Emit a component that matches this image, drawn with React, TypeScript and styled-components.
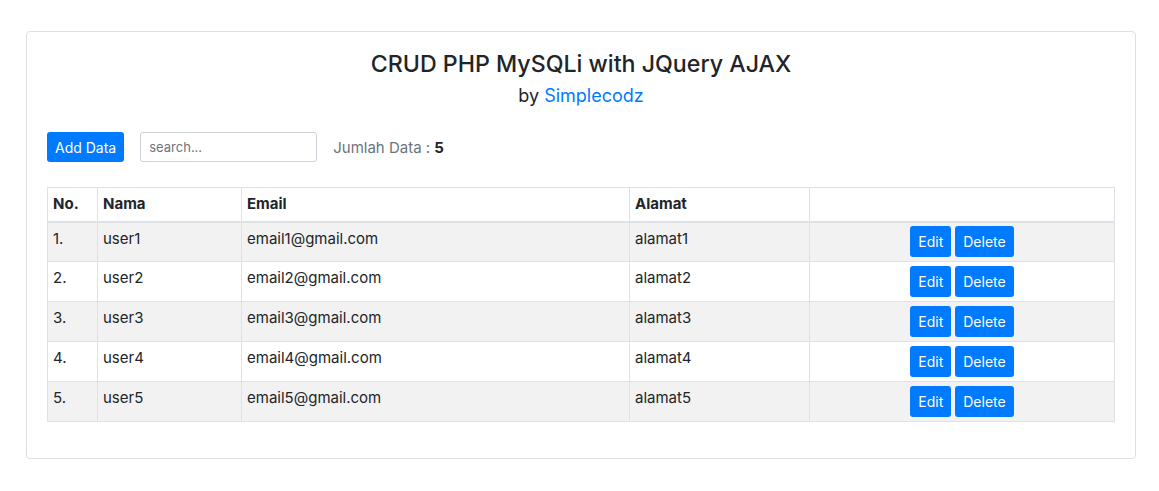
import React from "react";
import styled, { createGlobalStyle } from "styled-components";

const Global = createGlobalStyle`
  html, body { margin: 0; padding: 0; background: #fff; }
  body { font-family: Inter, "Noto Sans", sans-serif; color: #212529; }
  * { box-sizing: border-box; }
`;

const Page = styled.div`
  padding: 31px 23px 0 26px;
`;

const Card = styled.div`
  border: 1px solid #dfdfdf;
  border-radius: 4px;
  padding: 18px 20px 36px;
`;

const Header = styled.div`
  text-align: center;
`;

const Title = styled.h1`
  margin: 0;
  font-size: 23.2px;
  font-weight: 500;
  line-height: 29px;
  color: #212529;
`;

const Subtitle = styled.div`
  font-size: 18px;
  line-height: 26px;
  margin-top: 4px;
`;

const Link = styled.span`
  color: #007bff;
`;

const Toolbar = styled.div`
  display: flex;
  align-items: center;
  margin-top: 23px;
  height: 30px;
`;

const Button = styled.button<{ $h?: number }>`
  font-family: inherit;
  background: #007bff;
  color: #fff;
  border: none;
  border-radius: 3px;
  font-size: 14px;
  height: ${(p) => p.$h ?? 30}px;
  padding: 0 8px;
  cursor: pointer;
`;

const Search = styled.input`
  font-family: inherit;
  margin-left: 16px;
  width: 177px;
  height: 30px;
  border: 1px solid #ced4da;
  border-radius: 3px;
  padding: 0 8px;
  font-size: 13px;
  color: #495057;
  &::placeholder { color: #6c757d; }
`;

const Count = styled.div`
  margin-left: 16px;
  font-size: 15px;
  color: #6c757d;
  b { color: #212529; font-weight: 700; }
`;

const Table = styled.table`
  margin-top: 25px;
  width: 100%;
  border-collapse: collapse;
  table-layout: fixed;
  font-size: 15px;
`;

const Th = styled.th`
  text-align: left;
  font-weight: 700;
  border: 1px solid #dee2e6;
  border-bottom: 2px solid #dee2e6;
  padding: 0 5px 2px;
  height: 34px;
  vertical-align: middle;
`;

const Row = styled.tr<{ $odd: boolean }>`
  background: ${(p) => (p.$odd ? "#f2f2f2" : "#fff")};
`;

const Td = styled.td`
  border: 1px solid #dee2e6;
  padding: 6px 5px 0;
  height: 40px;
  vertical-align: top;
  text-align: left;
`;

const ActionCell = styled.td`
  border: 1px solid #dee2e6;
  height: 40px;
  padding: 0;
  text-align: center;
  vertical-align: middle;
`;

const Actions = styled.div`
  display: inline-flex;
  gap: 4px;
`;

const users = [1, 2, 3, 4, 5];

export default function App() {
  return (
    <>
      <Global />
      <Page>
        <Card>
          <Header>
            <Title>CRUD PHP MySQLi with JQuery AJAX</Title>
            <Subtitle>
              by <Link>Simplecodz</Link>
            </Subtitle>
          </Header>
          <Toolbar>
            <Button>Add Data</Button>
            <Search placeholder="search..." />
            <Count>
              Jumlah Data : <b>5</b>
            </Count>
          </Toolbar>
          <Table>
            <colgroup>
              <col style={{ width: 50 }} />
              <col style={{ width: 144 }} />
              <col style={{ width: 388 }} />
              <col style={{ width: 180 }} />
              <col />
            </colgroup>
            <thead>
              <tr>
                <Th>No.</Th>
                <Th>Nama</Th>
                <Th>Email</Th>
                <Th>Alamat</Th>
                <Th />
              </tr>
            </thead>
            <tbody>
              {users.map((n) => (
                <Row key={n} $odd={n % 2 === 1}>
                  <Td>{n}.</Td>
                  <Td>user{n}</Td>
                  <Td>email{n}@gmail.com</Td>
                  <Td>alamat{n}</Td>
                  <ActionCell>
                    <Actions>
                      <Button $h={31}>Edit</Button>
                      <Button $h={31}>Delete</Button>
                    </Actions>
                  </ActionCell>
                </Row>
              ))}
            </tbody>
          </Table>
        </Card>
      </Page>
    </>
  );
}
